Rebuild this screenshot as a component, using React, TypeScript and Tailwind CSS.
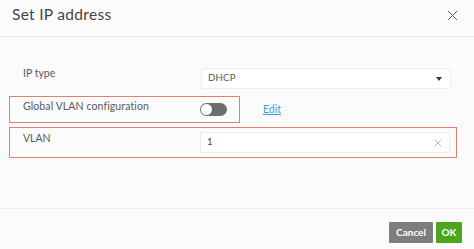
import { X } from 'lucide-react';

export default function App() {
  return (
    <div className="w-[474px] h-[249px] bg-[#fbfbfb] text-[#5a5a5a] flex flex-col overflow-hidden" style={{ fontFamily: 'Lato, "Noto Sans", sans-serif' }}>
      {/* Header */}
      <div className="h-[37px] flex items-center justify-between pl-[12px] pr-[13px] border-b border-[#ececec]">
        <span className="text-[15.5px] text-[#444] tracking-[0.3px] -mt-[6px]">Set IP address</span>
        <X className="w-[17px] h-[17px] text-[#555] -mt-[6px]" strokeWidth={1.4} />
      </div>

      {/* Body */}
      <div className="flex-1 pt-[31px] pl-[9px] flex flex-col">
        {/* IP type */}
        <div className="flex items-start h-[21px]">
          <div className="w-[192px] pl-[14px] text-[10.5px] leading-[11px]">IP type</div>
          <div className="w-[250px] h-[21px] border border-[#ececec] bg-white rounded-[2px] flex items-center justify-between pl-[6px] pr-[8px]">
            <span className="text-[9.5px] text-[#555] tracking-[0.3px]">DHCP</span>
            <svg width="6" height="4" viewBox="0 0 6 4"><path d="M0 0h6L3 4z" fill="#333" /></svg>
          </div>
        </div>

        {/* Global VLAN */}
        <div className="flex items-center mt-[7px]">
          <div className="w-[231px] h-[27px] border-[1.5px] border-[#e0806f] flex items-center">
            <div className="w-[190px] pl-[13px] text-[10.5px] pb-[5px] tracking-[0.1px]">Global VLAN configuration</div>
            <div className="w-[27px] h-[13px] rounded-full bg-[#6e6e6e] relative">
              <div className="absolute left-[1px] top-[1px] w-[11px] h-[11px] rounded-full bg-white" />
            </div>
          </div>
          <span className="ml-[23px] text-[10.5px] text-[#3c9ee0] underline">Edit</span>
        </div>

        {/* VLAN */}
        <div className="mt-[4px] w-[448px] h-[31px] border-[1.5px] border-[#e0806f] flex items-center">
          <div className="w-[190px] pl-[13px] text-[10.5px] pb-[8px]">VLAN</div>
          <div className="w-[250px] h-[21px] border border-[#ececec] bg-white rounded-[2px] flex items-center justify-between pl-[6px] pr-[5px]">
            <span className="text-[9.5px] text-[#444]">1</span>
            <X className="w-[12px] h-[12px] text-[#999]" strokeWidth={1.4} />
          </div>
        </div>
      </div>

      {/* Footer */}
      <div className="h-[41px] border-t border-[#ececec] flex items-start justify-end pt-[13px] pr-[12px] gap-[3px]">
        <button className="h-[21px] w-[44px] bg-[#7d7d7d] text-white text-[10px] font-bold rounded-[1px]">Cancel</button>
        <button className="h-[21px] w-[26px] bg-[#4ea51c] text-white text-[10px] font-bold rounded-[1px]">OK</button>
      </div>
    </div>
  );
}
